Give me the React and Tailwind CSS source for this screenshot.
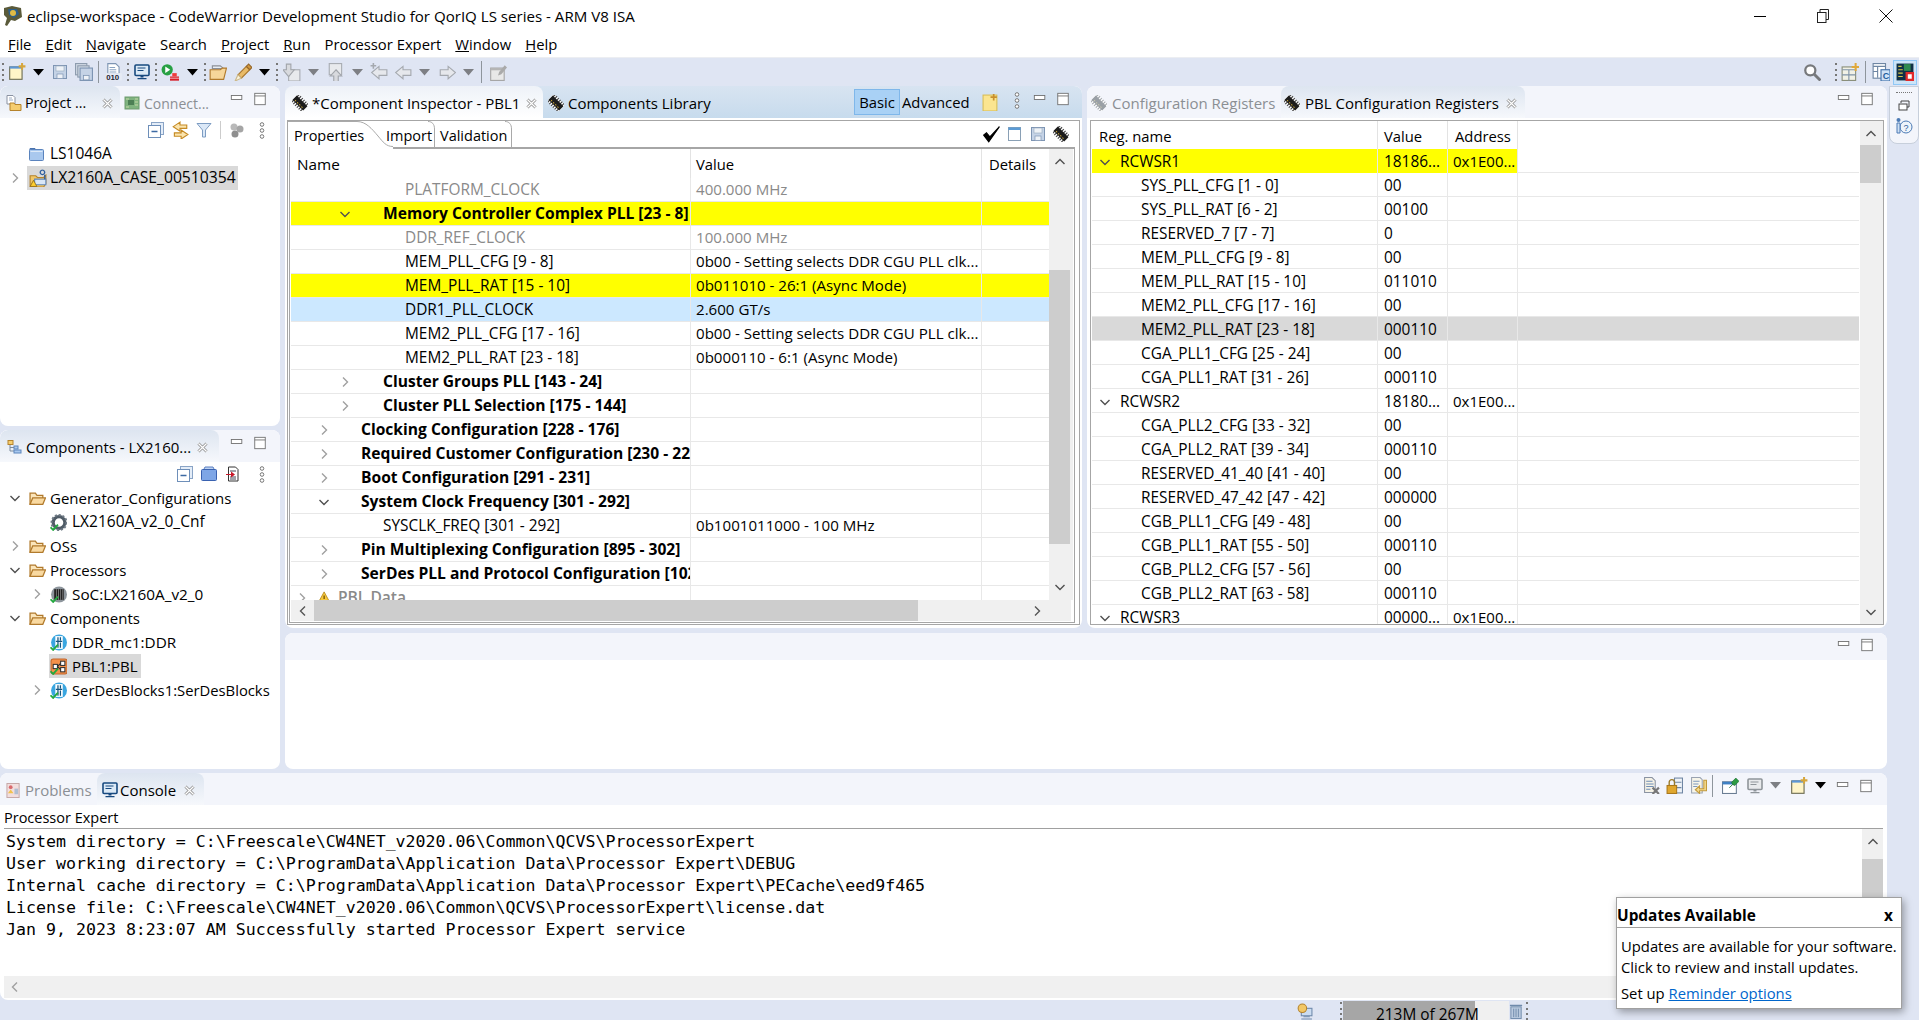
import React from 'react';

// --- small drawn icons, all on a 16x16 grid ---
const Svg = ({ size = 16, children, className = '' }) => (
  <svg width={size} height={size} viewBox="0 0 16 16" className={`shrink-0 ${className}`}>{children}</svg>
);

const Chev = ({ dir = 'right', dark }) => (
  <svg width="16" height="16" viewBox="0 0 16 16" className="shrink-0">
    {dir === 'right' && <path d="M6 3.5 10.5 8 6 12.5" fill="none" stroke={dark ? '#555' : '#a0a0a0'} strokeWidth="1.4" />}
    {dir === 'left' && <path d="M10 3.5 5.5 8 10 12.5" fill="none" stroke={dark ? '#555' : '#a0a0a0'} strokeWidth="1.4" />}
    {dir === 'down' && <path d="M3.5 6 8 10.5 12.5 6" fill="none" stroke="#505050" strokeWidth="1.4" />}
    {dir === 'up' && <path d="M3.5 10 8 5.5 12.5 10" fill="none" stroke="#505050" strokeWidth="1.4" />}
  </svg>
);

const Chip = ({ gray }) => (
  <Svg>
    <g transform="rotate(-45 8 8)">
      <rect x="3" y="0" width="10" height="16" fill="#fff" />
      <path d="M2.500 1.500h11M2.500 4h11M2.500 6.500h11M2.500 9h11M2.500 11.500h11M2.500 14h11" stroke={gray ? '#a9adb2' : '#4a4a4a'} strokeWidth="1.200" />
      <rect x="5" y="0.500" width="6" height="15" fill={gray ? '#9aa0a6' : '#1c1c1c'} />
      <path d="M6.500 2.500v11" stroke={gray ? '#c9c9b0' : '#caa83a'} strokeWidth="1" strokeDasharray="1.500 1.500" />
    </g>
  </Svg>
);

const CloseTab = () => (
  <Svg size={13}>
    <path d="M3 3 13 13M13 3 3 13" stroke="#8a8a8a" strokeWidth="3.4" />
    <path d="M3 3 13 13M13 3 3 13" stroke="#fff" strokeWidth="1.6" />
  </Svg>
);

const MinBtn = () => (
  <Svg size={14}><rect x="1.5" y="4" width="12" height="4.5" fill="#fff" stroke="#6d6d6d" /></Svg>
);
const MaxBtn = () => (
  <Svg size={14}>
    <rect x="2" y="1.5" width="12" height="13" fill="#fff" stroke="#6d6d6d" />
    <path d="M2 4.5h12" stroke="#6d6d6d" />
  </Svg>
);
const Dots = () => (
  <svg width="6" height="17" viewBox="0 0 6 17" className="shrink-0">
    <circle cx="3" cy="2.5" r="1.8" fill="#fff" stroke="#777" />
    <circle cx="3" cy="8.5" r="1.8" fill="#fff" stroke="#777" />
    <circle cx="3" cy="14.5" r="1.8" fill="#fff" stroke="#777" />
  </svg>
);
const Grip = () => (
  <svg width="2" height="20" viewBox="0 0 2 20" className="shrink-0">
    <path d="M1 1v2M1 7v2M1 12v2M1 17v2" stroke="#777" strokeWidth="2" />
  </svg>
);
const Sep = () => <div className="w-px h-[22px] bg-[#8e959c] shrink-0" />;
const Drop = ({ gray }) => (
  <svg width="11" height="7" viewBox="0 0 11 7" className="shrink-0"><path d="M0 0h11L5.5 6.5z" fill={gray ? '#7d7f84' : '#000'} /></svg>
);

const NewDoc = () => (
  <Svg size={18}>
    <rect x="1.5" y="3.5" width="11" height="11" fill="#fff5c8" stroke="#6d6d52" />
    <rect x="1.5" y="3" width="11" height="2" fill="#5d97d5" />
    <path d="M12.5 0v6M9.5 3h6" stroke="#d6a63c" strokeWidth="1.8" />
  </Svg>
);
const SaveIc = ({ className }) => (
  <Svg size={16} className={className}>
    <rect x="1.5" y="1.5" width="13" height="13" fill="#c5d3e6" stroke="#7e95b3" />
    <rect x="4" y="2" width="8" height="5" fill="#eef2f7" stroke="#95a7bd" strokeWidth=".6" />
    <rect x="5" y="10" width="6" height="4.5" fill="#eef2f7" stroke="#7e95b3" strokeWidth=".7" />
  </Svg>
);
const SaveAll = () => (
  <Svg size={18}>
    <rect x="0.5" y="0.5" width="10" height="10" fill="#d3dbe5" stroke="#8d9cae" />
    <rect x="2.5" y="2.5" width="10" height="10" fill="#d3dbe5" stroke="#8d9cae" />
    <rect x="4.5" y="4.5" width="11" height="11" fill="#c5d3e6" stroke="#7e95b3" />
    <rect x="7.5" y="11" width="5" height="4" fill="#eef2f7" stroke="#7e95b3" strokeWidth=".7" />
  </Svg>
);
const BinFile = () => (
  <Svg size={18}>
    <path d="M2.5.5h7l3 3v6h-10z" fill="#fff" stroke="#7e95b3" />
    <path d="M4 4h5M4 6h6M4 8h6" stroke="#8aa3c2" />
    <rect x="1" y="9" width="14" height="6.5" fill="#e6ebf4" />
    <text x="1" y="15.4" fontSize="7" fontWeight="700" fontFamily="'Liberation Sans'" fill="#223">010</text>
  </Svg>
);
const Monitor = ({ gray }) => {
  const c = gray ? '#8f959a' : '#17497f';
  return (
    <Svg size={16}>
      <rect x="1" y="1" width="14" height="10.5" rx="1" fill={gray ? '#e8eaec' : '#dbe9f6'} stroke={c} strokeWidth="1.6" />
      <path d="M3.5 4h8M3.5 6.5h6" stroke={c} />
      <path d="M6.5 12h3v1.5h-3zM3.5 14h9v1.3h-9z" fill={c} />
    </Svg>
  );
};
const RunRed = () => (
  <Svg size={18}>
    <circle cx="5.5" cy="6" r="5" fill="#27a044" />
    <path d="M3.8 3.2 8.2 6l-4.4 2.8z" fill="#fff" />
    <path d="M8 12h8v3.7H8z" fill="#d81c26" />
    <path d="M10 9h4v3h-4z" fill="#ef3b3b" />
    <path d="M8 13.5h8" stroke="#fff" strokeWidth=".6" />
  </Svg>
);
const FolderOpenTb = () => (
  <Svg size={18}>
    <path d="M3 5V2.5h7L13 5z" fill="#e8edf4" stroke="#8b8f96" />
    <path d="M1 6h9l2-1.5h3.5L13 14.5H1z" fill="#f6d69a" stroke="#b17a2c" />
  </Svg>
);
const Pencil = () => (
  <Svg size={18}>
    <path d="M3.5 10.5 11 3l3 3-7.5 7.5z" fill="#e9bb68" stroke="#a9772e" />
    <path d="M11 3l2-2 3 3-2 2z" fill="#d39a3f" stroke="#96672a" />
    <path d="M3.5 10.5 6.5 13.5 1 16z" fill="#fbf3dc" stroke="#cbb88a" />
  </Svg>
);
const GrayDown = () => (
  <Svg size={18}>
    <rect x="5" y="6" width="10" height="10" fill="#e8eaed" stroke="#a9adb3" />
    <path d="M3 1h4v5h3l-5 6-5-6h3z" fill="#d8dade" stroke="#a2a6ac" />
  </Svg>
);
const GrayUp = () => (
  <Svg size={18}>
    <rect x="2" y="0.5" width="11" height="10" fill="#e8eaed" stroke="#a9adb3" />
    <path d="M8 6l5 5.5h-3V17H6v-5.500H3z" fill="#d8dade" stroke="#a2a6ac" />
  </Svg>
);
const GrayArrow = ({ dir, star }) => (
  <Svg size={18}>
    {dir === 'left' ? (
      <path d="M8 3v3h7v5H8v3L1.500 8.500z" fill="#e6e8ec" stroke="#a5a9af" />
    ) : (
      <path d="M9 3v3H2v5h7v3l6.500-5.500z" fill="#e6e8ec" stroke="#a5a9af" />
    )}
    {star && <path d="M3 0v5M.5 2.500h5" stroke="#a5a9af" strokeWidth="1.400" />}
  </Svg>
);
const GrayNote = () => (
  <Svg size={18}>
    <rect x="1.500" y="4.500" width="12" height="11" fill="#e8e8e8" stroke="#a6a6a6" />
    <rect x="1.500" y="4.500" width="12" height="2" fill="#b5b5b5" />
    <path d="M9 8l5-6 2 2-5 6-3 1z" fill="#aaa" />
  </Svg>
);
const PageFolder = () => (
  <Svg size={16}>
    <path d="M1 .5h6l2 2V9H1z" fill="#fff" stroke="#8b93a2" />
    <path d="M3 3h3M3 5h4" stroke="#9eadc2" />
    <path d="M4 8h4l1 1.500h6v6H4z" fill="#f5cd6f" stroke="#b5832c" />
  </Svg>
);
const BoardIc = () => (
  <Svg size={16}>
    <rect x="1" y="2" width="14" height="12" fill="#7fb37f" stroke="#6f9b6f" />
    <rect x="4" y="5" width="6" height="5" fill="#4d7f55" />
    <path d="M2 4h3M11 4h3M11 7h3M11 10h3M2 12h3" stroke="#c8d8a8" />
  </Svg>
);
const CollapseAll = () => (
  <Svg size={16}>
    <rect x="3.500" y="0.500" width="12" height="12" fill="#e4edf8" stroke="#8aa4c6" />
    <rect x="0.500" y="3.500" width="12" height="12" fill="#fff" stroke="#6e8fb9" />
    <path d="M3.500 9.500h6" stroke="#3d6aa3" strokeWidth="1.400" />
  </Svg>
);
const LinkArrows = () => (
  <Svg size={18}>
    <path d="M8 1 2 5l6 4V6.500h6v-3H8z" fill="#fbe4ad" stroke="#c58a24" />
    <path d="M9 8l6 4-6 4v-2.500H3v-3h6z" fill="#fbe4ad" stroke="#c58a24" />
  </Svg>
);
const Funnel = () => (
  <Svg size={16}>
    <path d="M1 1.500h14L9.500 8v7h-3V8z" fill="#dbe8f7" stroke="#7d9cc2" />
  </Svg>
);
const GrayBalls = () => (
  <Svg size={16}>
    <circle cx="5" cy="5" r="3.500" fill="#b9b9b9" />
    <circle cx="11" cy="7" r="3.500" fill="#a5a5a5" />
    <circle cx="6" cy="12" r="3.500" fill="#8f8f8f" />
  </Svg>
);
const TreeFolderBlue = () => (
  <Svg size={16}>
    <path d="M1 4V2.500h5V4" fill="#7ea8dc" stroke="#4973ae" />
    <rect x="0.500" y="3.500" width="14" height="11" rx="1" fill="#a9c8ee" stroke="#5a83bd" />
    <path d="M1.500 5.500h12" stroke="#dce9f8" />
  </Svg>
);
const ProjectIc = () => (
  <Svg size={18}>
    <path d="M1 6h5l1.500 1.500H13l2-2V13l-2 3H1z" fill="#f2c765" stroke="#b5832c" />
    <path d="M5 9h10v5H5z" fill="#d8e6f6" stroke="#5d86bd" />
    <path d="M12 1a2 2 0 1 1-.1 0M14 5v4" fill="none" stroke="#2f5f9e" strokeWidth="1.200" />
    <path d="M4 10l3 5.500H1z" fill="#ffcf30" stroke="#8a6510" strokeWidth=".7" />
  </Svg>
);
const TreeIcon = () => (
  <Svg size={16}>
    <rect x="1" y="1.500" width="5" height="4" fill="#f5cd6f" stroke="#b5832c" />
    <path d="M3 6v6h4M3 8.500h4" fill="none" stroke="#7d8b9c" />
    <rect x="7" y="7" width="4" height="3" fill="#a9c8ee" stroke="#5d86bd" />
    <rect x="7" y="11" width="7" height="3" fill="#a9c8ee" stroke="#5d86bd" />
  </Svg>
);
const FolderTree = () => (
  <Svg size={17}>
    <path d="M1 13.500V3h5l1.500 2H13v2.500" fill="#fbe5ba" stroke="#b17a2c" strokeWidth="1.200" />
    <path d="M1 13.500 3.500 7.500H15.500L13 13.500z" fill="#f9d9a0" stroke="#b17a2c" strokeWidth="1.200" />
  </Svg>
);
const Tick = () => <path d="M0.500 12.500 3 15l4.500-5" fill="none" stroke="#22a83e" strokeWidth="1.700" />;
const GearIc = () => (
  <Svg size={17}>
    <circle cx="8.500" cy="8" r="5.500" fill="none" stroke="#4f5b66" strokeWidth="3" />
    <circle cx="8.500" cy="8" r="7" fill="none" stroke="#6f7a85" strokeWidth="2" strokeDasharray="2 1.600" />
    <Tick />
  </Svg>
);
const SocIc = () => (
  <Svg size={17}>
    <circle cx="8.500" cy="8" r="7.500" fill="#8d959c" />
    <rect x="4" y="3" width="9" height="10" fill="#1a1a1a" />
    <path d="M6 3v10M8 3v10M10 3v10M12 3v10" stroke="#aaa" strokeWidth=".6" />
    <Tick />
  </Svg>
);
const DdrIc = () => (
  <Svg size={17}>
    <circle cx="8.500" cy="8" r="7.500" fill="#3aa6e0" />
    <rect x="5" y="2" width="7" height="12" fill="#fff" />
    <path d="M7.500 3v10M9.800 3v3M9.800 8v5M5.500 7h6" stroke="#15557f" strokeWidth="1.200" />
    <Tick />
  </Svg>
);
const PblIc = () => (
  <Svg size={17}>
    <rect x="1" y="1" width="15" height="14" rx="2" fill="#f5914a" stroke="#c4672a" />
    <rect x="3" y="6" width="4" height="4" fill="#fff" stroke="#333" />
    <rect x="10" y="3" width="4" height="4" fill="#fff" stroke="#333" />
    <rect x="10" y="9" width="4" height="4" fill="#fff" stroke="#333" />
    <path d="M7 8l3-3M7 8l3 3" stroke="#333" />
    <Tick />
  </Svg>
);
const NewFolder = () => (
  <Svg size={16}>
    <rect x="0.500" y="3.500" width="15" height="11" rx="1" fill="#7ea6e6" stroke="#3a62b0" />
    <path d="M3 3l1-2h8l1 2" fill="#bcd2f2" stroke="#5a7fc0" />
  </Svg>
);
const ExportRed = () => (
  <Svg size={16}>
    <path d="M3.500 1h7l2.500 2.500V15h-9.500z" fill="#fff" stroke="#333" />
    <path d="M5 5h6M5 11h6M5 13h6" stroke="#445" />
    <path d="M1 8h5V5.500L10 8.500 6 11.500V9H1z" fill="#c8182a" />
  </Svg>
);
const NoteYellow = () => (
  <Svg size={17}>
    <rect x="1" y="1" width="13" height="15" fill="#fbe590" stroke="#d8bd55" />
    <path d="M11 0v6M8 3h6" stroke="#c88f2c" strokeWidth="1.600" />
  </Svg>
);
const CheckIc = () => (
  <Svg size={18}><path d="M1.500 9 6 15 15.500 1.500 7 10.500 4 7z" fill="#000" stroke="#000" /></Svg>
);
const WinIc = () => (
  <Svg size={16}>
    <rect x="1.500" y="1.500" width="12" height="13" fill="#fff" stroke="#8aa0b5" />
    <rect x="1.500" y="1.500" width="12" height="2.500" fill="#5b9bd5" />
  </Svg>
);
const WarnIc = () => (
  <Svg size={14}><path d="M7 1 13.500 13H.5z" fill="#f7c93b" stroke="#b88a1c" /><path d="M7 5v4M7 10.500v1.500" stroke="#6b4a00" strokeWidth="1.400" /></Svg>
);
const RestoreWin = () => (
  <svg width="12" height="14" viewBox="0 0 12 14" className="shrink-0">
    <rect x="0.500" y="3.500" width="8.500" height="10" fill="#fff" stroke="#222" />
    <path d="M3 3V.500h8.500V10.500H9" fill="none" stroke="#222" />
  </svg>
);
const ProblemsIc = () => (
  <Svg size={15}>
    <rect x="1" y="0.500" width="13" height="15" fill="#f2dede" stroke="#c3a5a5" />
    <circle cx="5" cy="4.500" r="2" fill="#d9696d" />
    <path d="M2 11l3-4 3 4z" fill="#f2c24c" />
    <rect x="9" y="6" width="4" height="6" fill="#b0bed2" />
  </Svg>
);
const RemoveDoc = () => (
  <Svg size={17}>
    <path d="M1.500.5h7l3 3v11h-10z" fill="#f5f2e6" stroke="#8a93a2" />
    <path d="M3 4h6M3 6.500h7M3 9h7M3 11.500h4" stroke="#6f8db5" />
    <path d="M9 10l6 6M15 10l-6 6" stroke="#777" strokeWidth="2" />
  </Svg>
);
const LockIc = () => (
  <Svg size={17}>
    <rect x="8" y="1" width="7.500" height="14" fill="#eef2f7" stroke="#6f86a3" />
    <path d="M8.500 5h6M8.500 10h6" stroke="#6f86a3" />
    <path d="M3 8V5a2.500 2.500 0 0 1 5 0v3" fill="none" stroke="#9a7a2a" strokeWidth="1.300" />
    <rect x="1" y="8" width="9" height="7.500" fill="#e0a72e" stroke="#a9771c" />
  </Svg>
);
const ScrollDoc = () => (
  <Svg size={17}>
    <path d="M1.500.5h8l2 2V15h-10z" fill="#f7f5ea" stroke="#9aa3b1" />
    <path d="M3 4h6M3 6.500h5M3 9h4" stroke="#7c98bd" />
    <path d="M13 3v8H9V8.500L5 12l4 3.500V13h6.500V3z" fill="#f4d98c" stroke="#c29a3d" />
  </Svg>
);
const PinIc = () => (
  <Svg size={17}>
    <rect x="0.500" y="4.500" width="13" height="11" fill="#fff" stroke="#6a7d93" />
    <rect x="0.500" y="4.500" width="13" height="2.500" fill="#3f80c4" />
    <path d="M7 10l3-3-1-2 4-4 3 3-4 4-2-1-3 3z" fill="#2e9b44" stroke="#1c6e2f" strokeWidth=".6" />
  </Svg>
);
const SearchIc = () => (
  <Svg size={18}>
    <circle cx="6.500" cy="6.500" r="4.500" fill="#fff" stroke="#77797c" strokeWidth="2" />
    <path d="M10 10l5.500 5.500" stroke="#77797c" strokeWidth="2.600" />
  </Svg>
);
const PerspNew = () => (
  <Svg size={18}>
    <rect x="1" y="3.500" width="12" height="12" fill="#f1f1e6" stroke="#8a8f7a" />
    <path d="M1 6h12M7 6v9.500M1 10.500h12" stroke="#7f93a8" />
    <path d="M13 0v7M9.500 3.500h7" stroke="#e0a83a" strokeWidth="1.800" />
  </Svg>
);
const PerspC = () => (
  <Svg size={18}>
    <rect x="1" y="0.500" width="11" height="13" fill="#fff" stroke="#6f86a3" />
    <path d="M1 3h11M5 3v10M1 7.500h4" stroke="#6f86a3" />
    <rect x="8" y="6" width="8" height="10" fill="#cfe2f6" stroke="#3f6fa8" />
    <text x="9.500" y="14" fontSize="8" fontFamily="'Liberation Sans'" fontWeight="700" fill="#1f5d9b">C</text>
  </Svg>
);
const PerspBoard = () => (
  <Svg size={18}>
    <rect x="0.500" y="0.500" width="15" height="15" fill="#113047" />
    <rect x="7" y="1" width="6" height="6" fill="#2f8a4f" />
    <path d="M2 3h3M2 6h4M2 9h4M2 12h4" stroke="#d6c447" />
    <rect x="8.500" y="8" width="7.500" height="8" fill="#e22a2a" />
    <rect x="10.500" y="10" width="3.500" height="4" fill="#fff" />
  </Svg>
);
const HeapCan = () => (
  <Svg size={15}>
    <rect x="2" y="3" width="11" height="12.500" fill="#b9c9de" stroke="#6f8aab" />
    <path d="M5 5v9M7.500 5v9M10 5v9" stroke="#6f8aab" />
    <path d="M1 1.500h13" stroke="#6f8aab" strokeWidth="1.400" />
  </Svg>
);
const WorkspaceIc = () => (
  <Svg size={17}>
    <rect x="5" y="5" width="10" height="7" fill="#cbdcf0" stroke="#6f8aab" />
    <circle cx="6" cy="5" r="4" fill="#f2c765" stroke="#b5832c" />
    <path d="M7 13h6M5 15h10" stroke="#6f8aab" />
  </Svg>
);
const CwLogo = () => (
  <svg width="22" height="22" viewBox="0 0 22 22" className="shrink-0">
    <path d="M2 3l8-2 9 2 1 9-7 4-4-1-4 6-2-1 2-7-3-3z" fill="#5a5a3a" />
    <path d="M6 4h9l2 5-5 4-5-3z" fill="#2d5f8a" />
    <circle cx="11" cy="8" r="3" fill="#e0bb45" />
  </svg>
);

// end of a sub tab, small arc at the top
const TabEnd = () => (
  <svg width="7" height="26" viewBox="0 0 7 26" className="shrink-0">
    <path d="M0 .5C4 .5 6.500 3 6.500 8V26" fill="none" stroke="#a9a9a9" />
  </svg>
);

// --- shared bits ---
const Tab = ({ icon, children, active, close, className = '' }) => (
  <div
    className={`flex items-center h-full pt-[2px] whitespace-nowrap shrink-0 ${active ? 'rounded-t-lg bg-gradient-to-b from-[#dde5f0] to-[#f6f8fc] text-black' : 'text-[#8b8f94]'} ${className}`}
  >
    {icon}
    {children}
    {close && <CloseTab />}
  </div>
);

const VScroll = ({ top, thumb, rest, w, chevUp, chevDown }) => (
  <div className={`${w} shrink-0 bg-[#f0f0f0] flex flex-col h-full`}>
    <div className={`${top} flex justify-center ${chevUp} shrink-0 w-[21px]`}><Chev dir="up" /></div>
    <div className={`${thumb} w-[21px] bg-[#cdcdcd] shrink-0`} />
    <div className={`${rest} flex justify-center items-end ${chevDown} w-[21px]`}><Chev dir="down" /></div>
  </div>
);

const TOOLBAR = [
  ['w-[6px]', <Grip />], ['w-[22px]', <NewDoc />], ['w-[20px]', <Drop />], ['w-[24px]', <SaveIc />],
  ['w-[24px]', <SaveAll />], ['w-[4px]', <Sep />], ['w-[27px]', <BinFile />], ['w-[2px]', <Grip />],
  ['w-[26px]', <Monitor />], ['w-[2px]', <Grip />], ['w-[26px]', <RunRed />], ['w-[18px]', <Drop />],
  ['w-[8px]', <Grip />], ['w-[18px]', <FolderOpenTb />], ['w-[32px]', <Pencil />], ['w-[10px]', <Drop />],
  ['w-[16px]', <Grip />], ['w-[14px]', <GrayDown />], ['w-[28px]', <Drop gray />], ['w-[18px]', <GrayUp />],
  ['w-[24px]', <Drop gray />], ['w-[20px]', <GrayArrow dir="left" star />], ['w-[28px]', <GrayArrow dir="left" />],
  ['w-[14px]', <Drop gray />], ['w-[32px]', <GrayArrow dir="right" />], ['w-[10px]', <Drop gray />],
  ['w-[16px]', <Sep />], ['w-[18px]', <GrayNote />],
];

const MENU = [
  ['F', 'ile'], ['E', 'dit'], ['N', 'avigate'], ['', 'Search'], ['P', 'roject'], ['R', 'un'],
  ['', 'Processor Expert'], ['W', 'indow'], ['H', 'elp'],
];

// lead: indent class, tm: gap between chevron and text
const PROPS = [
  { n: 'PLATFORM_CLOCK', v: '400.000 MHz', lead: 'pl-[114px]', gray: true },
  { n: 'Memory Controller Complex PLL [23 - 8]', lead: 'pl-[46px]', tm: 'ml-[30px]', ch: 'down', bold: true, bg: 'bg-[#ffff00]' },
  { n: 'DDR_REF_CLOCK', v: '100.000 MHz', lead: 'pl-[114px]', gray: true },
  { n: 'MEM_PLL_CFG [9 - 8]', v: '0b00 - Setting selects DDR CGU PLL clk...', lead: 'pl-[114px]' },
  { n: 'MEM_PLL_RAT [15 - 10]', v: '0b011010 - 26:1 (Async Mode)', lead: 'pl-[114px]', bg: 'bg-[#ffff00]' },
  { n: 'DDR1_PLL_CLOCK', v: '2.600 GT/s', lead: 'pl-[114px]', bg: 'bg-[#cce8ff]' },
  { n: 'MEM2_PLL_CFG [17 - 16]', v: '0b00 - Setting selects DDR CGU PLL clk...', lead: 'pl-[114px]' },
  { n: 'MEM2_PLL_RAT [23 - 18]', v: '0b000110 - 6:1 (Async Mode)', lead: 'pl-[114px]' },
  { n: 'Cluster Groups PLL [143 - 24]', lead: 'pl-[46px]', tm: 'ml-[30px]', ch: 'right', bold: true },
  { n: 'Cluster PLL Selection [175 - 144]', lead: 'pl-[46px]', tm: 'ml-[30px]', ch: 'right', bold: true },
  { n: 'Clocking Configuration [228 - 176]', lead: 'pl-[25px]', tm: 'ml-[29px]', ch: 'right', bold: true },
  { n: 'Required Customer Configuration [230 - 229]', lead: 'pl-[25px]', tm: 'ml-[29px]', ch: 'right', bold: true },
  { n: 'Boot Configuration [291 - 231]', lead: 'pl-[25px]', tm: 'ml-[29px]', ch: 'right', bold: true },
  { n: 'System Clock Frequency [301 - 292]', lead: 'pl-[25px]', tm: 'ml-[29px]', ch: 'down', bold: true },
  { n: 'SYSCLK_FREQ [301 - 292]', v: '0b1001011000 - 100 MHz', lead: 'pl-[92px]' },
  { n: 'Pin Multiplexing Configuration [895 - 302]', lead: 'pl-[25px]', tm: 'ml-[29px]', ch: 'right', bold: true },
  { n: 'SerDes PLL and Protocol Configuration [1023 - 896]', lead: 'pl-[25px]', tm: 'ml-[29px]', ch: 'right', bold: true },
];

const REGS = [
  ['RCWSR1', '18186...', '0x1E00...', 'y'],
  ['SYS_PLL_CFG [1 - 0]', '00'], ['SYS_PLL_RAT [6 - 2]', '00100'], ['RESERVED_7 [7 - 7]', '0'],
  ['MEM_PLL_CFG [9 - 8]', '00'], ['MEM_PLL_RAT [15 - 10]', '011010'], ['MEM2_PLL_CFG [17 - 16]', '00'],
  ['MEM2_PLL_RAT [23 - 18]', '000110', '', 's'], ['CGA_PLL1_CFG [25 - 24]', '00'], ['CGA_PLL1_RAT [31 - 26]', '000110'],
  ['RCWSR2', '18180...', '0x1E00...', 'h'],
  ['CGA_PLL2_CFG [33 - 32]', '00'], ['CGA_PLL2_RAT [39 - 34]', '000110'], ['RESERVED_41_40 [41 - 40]', '00'],
  ['RESERVED_47_42 [47 - 42]', '000000'], ['CGB_PLL1_CFG [49 - 48]', '00'], ['CGB_PLL1_RAT [55 - 50]', '000110'],
  ['CGB_PLL2_CFG [57 - 56]', '00'], ['CGB_PLL2_RAT [63 - 58]', '000110'],
  ['RCWSR3', '00000...', '0x1E00...', 'h'],
];

const COMPONENTS = [
  { t: 'Generator_Configurations', ch: 'down', icon: <FolderTree />, size: 'text-[15px]' },
  { t: 'LX2160A_v2_0_Cnf', icon: <GearIc />, deep: true, size: 'text-[15.5px]' },
  { t: 'OSs', ch: 'right', icon: <FolderTree />, size: 'text-[15px]' },
  { t: 'Processors', ch: 'down', icon: <FolderTree />, size: 'text-[15px]' },
  { t: 'SoC:LX2160A_v2_0', ch: 'right', icon: <SocIc />, deep: true, size: 'text-[15.3px]' },
  { t: 'Components', ch: 'down', icon: <FolderTree />, size: 'text-[15px]' },
  { t: 'DDR_mc1:DDR', icon: <DdrIc />, deep: true, size: 'text-[15.3px]' },
  { t: 'PBL1:PBL', icon: <PblIc />, deep: true, sel: true, size: 'text-[15px]' },
  { t: 'SerDesBlocks1:SerDesBlocks', ch: 'right', icon: <DdrIc />, deep: true, size: 'text-[14.8px]' },
];

const CONSOLE = [
  'System directory = C:\\Freescale\\CW4NET_v2020.06\\Common\\QCVS\\ProcessorExpert',
  'User working directory = C:\\ProgramData\\Application Data\\Processor Expert\\DEBUG',
  'Internal cache directory = C:\\ProgramData\\Application Data\\Processor Expert\\PECache\\eed9f465',
  'License file: C:\\Freescale\\CW4NET_v2020.06\\Common\\QCVS\\ProcessorExpert\\license.dat',
  'Jan 9, 2023 8:23:07 AM Successfully started Processor Expert service',
];

function TitleBar() {
  return (
    <div className="h-[32px] bg-white flex items-center shrink-0 pl-[2px]">
      <CwLogo />
      <span className="ml-[3px] text-[15.1px]">eclipse-workspace - CodeWarrior Development Studio for QorIQ LS series - ARM V8 ISA</span>
      <div className="ml-auto flex items-center mr-[2px]">
        <div className="w-[63px] flex justify-center"><div className="w-[12px] h-px bg-black" /></div>
        <div className="w-[63px] flex justify-center"><RestoreWin /></div>
        <div className="w-[63px] flex justify-center">
          <svg width="14" height="14" viewBox="0 0 14 14"><path d="M.5.5l13 13M13.500.5l-13 13" stroke="#111" /></svg>
        </div>
      </div>
    </div>
  );
}

function Toolbar() {
  return (
    <div className="h-[29px] bg-[#dfe5f3] border-t border-[#eceef2] flex items-center shrink-0">
      {TOOLBAR.map(([w, ic], i) => (
        <div key={i} className={`${w} flex justify-center shrink-0`}>{ic}</div>
      ))}
      <div className="ml-auto flex items-center">
        <div className="w-[46px] flex justify-center"><SearchIc /></div>
        <div className="w-[2px] flex justify-center"><Grip /></div>
        <div className="w-[26px] flex justify-center"><PerspNew /></div>
        <div className="w-[5px] flex justify-center"><Sep /></div>
        <div className="w-[25px] flex justify-center"><PerspC /></div>
        <div className="w-[24px] h-[25px] flex items-center justify-center bg-[#cde4f7] border border-[#90c8f6] mr-[2px]"><PerspBoard /></div>
      </div>
    </div>
  );
}

function ProjectPanel() {
  return (
    <div className="h-[340px] bg-white rounded-lg flex flex-col overflow-hidden">
      <div className="h-[32px] bg-[#f3f5fb] flex items-center shrink-0 text-[14.2px]">
        <Tab active close icon={<span className="ml-[6px] mr-[3px]"><PageFolder /></span>} className="w-[120px]">
          <span className="w-[76px]">Project ...</span>
        </Tab>
        <Tab icon={<span className="ml-[4px] mr-[4px]"><BoardIc /></span>} className="text-[14px]">Connect...</Tab>
        <div className="ml-auto flex items-center gap-[9px] pr-[13px] pb-[7px]"><MinBtn /><MaxBtn /></div>
      </div>
      <div className="h-[24px] flex items-center justify-end pr-[15px] gap-[7px] shrink-0">
        <CollapseAll /><LinkArrows /><Funnel />
        <div className="w-px h-[18px] bg-[#ccc] mx-[1px]" />
        <GrayBalls /><span className="ml-[7px]"><Dots /></span>
      </div>
      <div className="h-[24px] flex items-center pl-[29px] shrink-0"><TreeFolderBlue /><span className="ml-[5px] text-[15.5px]">LS1046A</span></div>
      <div className="h-[24px] flex items-center pl-[7px] shrink-0">
        <Chev dir="right" />
        <div className="ml-[4px] flex items-center bg-[#d9d9d9] h-full w-[211px] pl-[2px] whitespace-nowrap">
          <ProjectIc /><span className="ml-[3px] text-[15.7px]">LX2160A_CASE_00510354</span>
        </div>
      </div>
    </div>
  );
}

function ComponentsPanel() {
  return (
    <div className="h-[339px] mt-[4px] bg-white rounded-lg flex flex-col overflow-hidden">
      <div className="h-[32px] bg-[#f3f5fb] flex items-center shrink-0 text-[15px]">
        <Tab active close icon={<span className="ml-[7px] mr-[3px]"><TreeIcon /></span>} className="w-[219px]">
          <span className="w-[170px]">Components - LX2160...</span>
        </Tab>
        <div className="ml-auto flex items-center gap-[9px] pr-[13px] pb-[7px]"><MinBtn /><MaxBtn /></div>
      </div>
      <div className="h-[24px] flex items-center justify-end pr-[15px] gap-[8px] shrink-0">
        <CollapseAll /><NewFolder /><ExportRed /><span className="ml-[10px]"><Dots /></span>
      </div>
      <div className="flex flex-col">
        {COMPONENTS.map(c => (
          <div key={c.t} className={`h-[24px] flex items-center whitespace-nowrap ${c.deep ? 'pl-[29px]' : 'pl-[7px]'}`}>
            <div className="w-[16px] shrink-0">{c.ch && <Chev dir={c.ch} />}</div>
            <div className={`flex items-center h-full pl-[1px] pr-[3px] ${c.deep ? 'ml-[4px]' : 'ml-[5px]'} ${c.sel ? 'bg-[#d9d9d9]' : ''}`}>
              {c.icon}<span className={`${c.deep ? 'ml-[5px]' : 'ml-[4px]'} ${c.size}`}>{c.t}</span>
            </div>
          </div>
        ))}
      </div>
    </div>
  );
}

function InspectorPanel() {
  return (
    <div className="w-[797px] h-[542px] bg-white rounded-lg flex flex-col overflow-hidden shrink-0">
      <div className="h-[32px] bg-gradient-to-b from-[#d8e4f1] to-[#c7dbed] flex items-center shrink-0 text-[15px]">
        <div className="w-[258px] h-full pt-[2px] rounded-t-lg bg-gradient-to-b from-[#eef2f8] to-white flex items-center pl-[7px] whitespace-nowrap shrink-0">
          <Chip /><span className="ml-[4px] w-[213px]">*Component Inspector - PBL1</span><CloseTab />
        </div>
        <div className="w-[311px] h-full pt-[2px] flex items-center pl-[5px] whitespace-nowrap shrink-0">
          <Chip /><span className="ml-[4px]">Components Library</span>
        </div>
        <div className="w-[46px] h-[26px] bg-[#a9d1f5] border border-[#7fb7ea] flex items-center justify-center text-[14.8px] shrink-0">Basic</div>
        <span className="ml-[2px] w-[80px] text-[14.8px] shrink-0">Advanced</span>
        <NoteYellow />
        <div className="ml-[15px] pb-[3px]"><Dots /></div>
        <div className="ml-[13px] pb-[7px]"><MinBtn /></div>
        <div className="ml-[9px] pb-[7px]"><MaxBtn /></div>
      </div>
      <div className="mx-[2px] mt-[2px] h-[505px] border border-[#a6a6a6] flex flex-col">
        <div className="h-[26px] flex items-center shrink-0 relative text-[14.5px]">
          {/* curved edge of the selected sub tab */}
          <svg width="106" height="26" viewBox="0 0 106 26" className="absolute left-0 top-0">
            <path d="M0 .5H69C78 .5 84 8 90 15 95 21 98 25.500 105 25.500" fill="none" stroke="#a9a9a9" />
          </svg>
          <span className="ml-[6px] mt-[4px] w-[92px] shrink-0">Properties</span>
          <span className="w-[42px] mt-[4px] shrink-0">Import</span>
          <TabEnd />
          <span className="ml-[5px] mt-[4px] w-[65px] shrink-0">Validation</span>
          <TabEnd />
          <div className="ml-auto mr-[10px] flex items-center gap-[7px]">
            <CheckIc /><WinIc /><SaveIc /><Chip />
          </div>
        </div>
        <div className="ml-[1px] mr-[4px] h-[476px] border-x border-b border-[#a6a6a6] flex flex-col">
          <div className="h-[2px] flex shrink-0"><div className="w-[103px]" /><div className="flex-1 bg-[#a6a6a6]" /></div>
          <div className="flex h-[451px] shrink-0">
            <div className="w-[758px] ml-[1px] flex flex-col shrink-0">
              <div className="h-[29px] grid grid-cols-[400px_291px_67px] items-stretch shrink-0 text-[14.8px]">
                <div className="pl-[6px] pt-[4px] border-r border-[#e3e3e3] text-[15.300px]">Name</div>
                <div className="pl-[5px] pt-[4px] border-r border-[#e3e3e3]">Value</div>
                <div className="pl-[7px] pt-[4px]">Details</div>
              </div>
              <div className="h-[422px] overflow-hidden">
                {PROPS.map(r => (
                  <div key={r.n} className={`h-[24px] grid grid-cols-[400px_291px_67px] border-b border-[#e8e8e8] ${r.bg || ''}`}>
                    <div className={`flex items-center whitespace-nowrap overflow-hidden border-r border-[#e8e8e8] ${r.lead} ${r.gray ? 'text-[#8a8a8a]' : ''} ${r.bold ? 'font-bold text-[15.6px]' : 'text-[15.4px]'}`}>
                      {r.ch && <Chev dir={r.ch} />}
                      <span className={r.tm || ''}>{r.n}</span>
                    </div>
                    <div className={`flex items-center pl-[5px] text-[15.100px] whitespace-nowrap overflow-hidden border-r border-[#e8e8e8] ${r.gray ? 'text-[#8a8a8a]' : ''}`}>{r.v}</div>
                    <div />
                  </div>
                ))}
                <div className="h-[24px] grid grid-cols-[400px_291px_67px]">
                  <div className="flex items-center pl-[3px] whitespace-nowrap border-r border-[#e8e8e8] font-semibold text-[15.6px] text-[#8a8a8a]">
                    <Chev dir="right" /><span className="ml-[8px]"><WarnIc /></span><span className="ml-[6px]">PBL Data</span>
                  </div>
                  <div className="border-r border-[#e8e8e8]" /><div />
                </div>
              </div>
            </div>
            <VScroll top="h-[121px]" thumb="h-[274px]" rest="flex-1" w="w-[24px]" chevUp="pt-[5px]" chevDown="pb-[5px]" />
          </div>
          <div className="h-[21px] flex bg-[#f0f0f0] ml-[1px] shrink-0 mr-[3px]">
            <div className="w-[23px] flex items-center justify-center"><Chev dir="left" dark /></div>
            <div className="w-[604px] bg-[#cdcdcd]" />
            <div className="flex-1 flex items-center justify-end pr-[26px]"><Chev dir="right" dark /></div>
          </div>
        </div>
      </div>
    </div>
  );
}

function RegistersPanel() {
  return (
    <div className="w-[800px] h-[542px] ml-[5px] bg-white rounded-lg flex flex-col overflow-hidden shrink-0">
      <div className="h-[32px] bg-[#f3f5fb] flex items-center shrink-0 text-[15px]">
        <div className="w-[194px] h-full pt-[2px] flex items-center pl-[4px] whitespace-nowrap text-[#8b8f94] shrink-0">
          <Chip gray /><span className="ml-[5px]">Configuration Registers</span>
        </div>
        <div className="w-[244px] h-full pt-[2px] rounded-t-lg bg-gradient-to-b from-[#dde5f0] to-[#f6f8fc] flex items-center pl-[3px] whitespace-nowrap shrink-0">
          <Chip /><span className="ml-[5px] w-[200px]">PBL Configuration Registers</span><CloseTab />
        </div>
        <div className="ml-auto flex items-center gap-[9px] pr-[13px] pb-[7px]"><MinBtn /><MaxBtn /></div>
      </div>
      <div className="ml-[3px] mr-[3px] mt-[2px] h-[505px] border border-[#a6a6a6] flex">
        <div className="w-[768px] pl-[1px] flex flex-col overflow-hidden shrink-0">
          <div className="h-[28px] grid grid-cols-[286px_70px_70px_341px] shrink-0 text-[14.8px]">
            <div className="pl-[7px] pt-[4px] border-r border-[#e3e3e3]">Reg. name</div>
            <div className="pl-[6px] pt-[4px] border-r border-[#e3e3e3]">Value</div>
            <div className="pl-[7px] pt-[4px] border-r border-[#e3e3e3]">Address</div>
            <div />
          </div>
          {REGS.map(([n, v, a, k]) => {
            const head = k === 'y' || k === 'h';
            return (
              <div key={n} className={`h-[24px] shrink-0 grid grid-cols-[286px_70px_70px_341px] border-b border-[#e8e8e8] text-[15.4px] ${k === 's' ? 'bg-[#d9d9d9]' : ''}`}>
                <div className={`flex items-center pt-[1px] whitespace-nowrap border-r border-[#e8e8e8] ${k === 'y' ? 'bg-[#ffff00]' : ''} ${head ? 'pl-[5px]' : 'pl-[49px]'}`}>
                  {head && <Chev dir="down" />}
                  <span className={head ? 'ml-[7px]' : ''}>{n}</span>
                </div>
                <div className={`flex items-center pt-[1px] pl-[6px] whitespace-nowrap border-r border-[#e8e8e8] ${k === 'y' ? 'bg-[#ffff00]' : ''}`}>{v}</div>
                <div className={`flex items-center pt-[1px] pl-[5px] whitespace-nowrap text-[15px] border-r border-[#e8e8e8] ${k === 'y' ? 'bg-[#ffff00]' : ''}`}>{a}</div>
                <div />
              </div>
            );
          })}
        </div>
        <VScroll top="h-[24px]" thumb="h-[38px]" rest="flex-1" w="w-[23px] ml-[1px]" chevUp="pt-[5px]" chevDown="pb-[4px]" />
      </div>
    </div>
  );
}

function ConsolePanel() {
  return (
    <div className="w-[1887px] h-[227px] bg-white rounded-lg flex flex-col overflow-hidden shrink-0">
      <div className="h-[32px] bg-[#f3f5fb] flex items-center shrink-0 text-[15px]">
        <div className="flex items-center pl-[6px] pt-[2px] text-[#8b8f94] w-[97px] shrink-0"><ProblemsIc /><span className="ml-[4px]">Problems</span></div>
        <div className="w-[107px] h-full pt-[2px] rounded-t-lg bg-gradient-to-b from-[#dde5f0] to-[#f6f8fc] flex items-center pl-[5px] shrink-0">
          <Monitor /><span className="ml-[2px] w-[63px]">Console</span><CloseTab />
        </div>
        <div className="ml-auto flex items-center pr-[14px] pb-[7px]">
          <RemoveDoc /><span className="ml-[6px]"><LockIc /></span><span className="ml-[7px]"><ScrollDoc /></span>
          <div className="ml-[5px]"><Sep /></div>
          <span className="ml-[9px]"><PinIc /></span>
          <span className="ml-[8px]"><Monitor gray /></span>
          <span className="ml-[7px]"><Drop gray /></span>
          <span className="ml-[9px]"><NewDoc /></span>
          <span className="ml-[7px]"><Drop /></span>
          <span className="ml-[10px]"><MinBtn /></span>
          <span className="ml-[9px]"><MaxBtn /></span>
        </div>
      </div>
      <div className="h-[24px] mx-[4px] pt-[3px] border-b border-[#a0a0a0] flex items-center shrink-0 text-[14.5px]">Processor Expert</div>
      <div className="flex h-[147px] shrink-0 ml-[4px] mr-[4px]">
        <div className="flex-1 pt-[2px] pl-[2px] font-['DejaVu_Sans_Mono',monospace] text-[16.6px] leading-[22px] whitespace-pre">
          {CONSOLE.map(l => <div key={l}>{l}</div>)}
        </div>
        <VScroll top="h-[30px]" thumb="h-[80px]" rest="flex-1" w="w-[21px]" chevUp="pt-[5px]" chevDown="" />
      </div>
      <div className="h-[22px] mx-[4px] bg-[#f0f0f0] flex items-center shrink-0 pl-[3px]"><Chev dir="left" /></div>
    </div>
  );
}

function StatusBar() {
  return (
    <div className="h-[20px] flex items-start shrink-0 overflow-hidden">
      <div className="ml-[1296px] mt-[3px]"><WorkspaceIc /></div>
      <div className="ml-[27px] mt-[1px]"><Grip /></div>
      <div className="ml-[1px] mt-[1px] w-[166px] h-[19px] bg-[#f0f0f0] relative">
        <div className="absolute left-0 top-0 h-full w-[132px] bg-[#a6a6a6]" />
        <div className="absolute left-[33px] top-[4px] whitespace-nowrap text-[15.4px] leading-[20px]">213M of 267M</div>
      </div>
      <div className="mt-[4px]"><HeapCan /></div>
      <div className="ml-[2px] mt-[1px]"><Grip /></div>
    </div>
  );
}

export default function App() {
  return (
    <div className="relative w-[1919px] h-[1020px] overflow-hidden bg-[#dfe5f3] flex flex-col font-['Open_Sans',sans-serif] text-[15.4px] text-black">
      <TitleBar />
      <div className="h-[25px] bg-white flex items-center gap-[14px] pl-[8px] shrink-0 text-[14.8px]">
        {MENU.map(([u, rest]) => (
          <span key={rest}><span className="underline">{u}</span>{rest}</span>
        ))}
      </div>
      <Toolbar />
      <div className="flex h-[687px] shrink-0">
        <div className="w-[280px] flex flex-col shrink-0">
          <ProjectPanel />
          <ComponentsPanel />
        </div>
        <div className="ml-[5px] flex flex-col">
          <div className="flex">
            <InspectorPanel />
            <RegistersPanel />
          </div>
          <div className="mt-[5px] h-[136px] w-[1602px] bg-white rounded-lg overflow-hidden">
            <div className="h-[27px] bg-[#f3f5fb] flex items-center justify-end gap-[9px] pr-[13px] pb-[3px]"><MinBtn /><MaxBtn /></div>
          </div>
        </div>
        <div className="ml-[2px] w-[30px] h-[58px] bg-[#f3f5fb] border border-[#c7cfdb] rounded-b-lg flex flex-col items-center shrink-0">
          <div className="mt-[5px] w-[16px] h-px border-t border-dotted border-[#777]" />
          <svg width="14" height="14" viewBox="0 0 14 14" className="mt-[6px]"><rect x="2" y="5" width="8" height="6" fill="#fff" stroke="#444" /><path d="M4 4V2h8v6h-2" fill="none" stroke="#444" /></svg>
          <svg width="18" height="18" viewBox="0 0 18 18" className="mt-[4px]"><circle cx="11" cy="10" r="6" fill="#eef4fb" stroke="#4d7bb5" /><circle cx="3.500" cy="3" r="2" fill="#4d7bb5" /><path d="M2 6h3v10H2z" fill="#cfe0f3" stroke="#4d7bb5" /><text x="8.500" y="13.500" fontSize="9" fontFamily="'Liberation Sans'" fill="#2d5f9e">?</text></svg>
        </div>
      </div>
      <ConsolePanel />
      <StatusBar />

      {/* update notification, sits over the console */}
      <div className="absolute left-[1616px] top-[897px] w-[286px] h-[112px] bg-white border border-[#a0a0a0] shadow-[2px_3px_8px_rgba(0,0,0,0.35)] flex flex-col">
        <div className="h-[30px] border-b border-[#a0a0a0] flex items-center justify-between pl-0 pr-[8px] pt-[6px] font-bold shrink-0">
          <span>Updates Available</span><span>x</span>
        </div>
        <div className="pl-[4px] pt-[8px] leading-[21px] whitespace-nowrap text-[14.8px]">
          <div>Updates are available for your software.</div>
          <div>Click to review and install updates.</div>
          <div className="mt-[5px]">Set up <span className="underline text-[#0066cc]">Reminder options</span></div>
        </div>
      </div>
    </div>
  );
}
